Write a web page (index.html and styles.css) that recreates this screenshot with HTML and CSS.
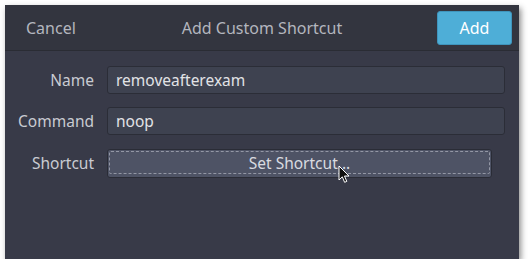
FILE: index.html
```html
<!DOCTYPE html>
<html>
<head>
<meta charset="utf-8">
<link rel="stylesheet" href="styles.css">
</head>
<body>
<div class="window">
  <div class="header">
    <span class="cancel">Cancel</span>
    <span class="title">Add Custom Shortcut</span>
    <button class="add">Add</button>
  </div>
  <div class="form">
    <label class="label">Name</label>
    <div class="input">removeafterexam</div>
    <label class="label">Command</label>
    <div class="input">noop</div>
    <label class="label">Shortcut</label>
    <div class="shortcut-wrap">
      <div class="shortcut"><span class="focus">Set Shortcut...</span></div>
      <svg class="cursor" width="12" height="19" viewBox="0 0 12 19"><path d="M1 1 L1 15 L4.3 11.8 L6.6 17.3 L8.8 16.4 L6.5 11 L11 11 Z" fill="#111" stroke="#fff" stroke-width="1" stroke-linejoin="round"/></svg>
    </div>
  </div>
</div>
</body>
</html>
```
FILE: styles.css
```css
html, body {
  margin: 0;
  padding: 0;
  background: #ffffff;
}
body {
  font-family: "Noto Sans", "Open Sans", sans-serif;
  font-size: 15.5px;
}
.window {
  margin: 5px 0 0 5px;
  width: 514px;
  height: 254px;
  background: #383a48;
  box-shadow: 2px 3px 6px rgba(0, 0, 0, 0.45);
  display: flex;
  flex-direction: column;
}
.header {
  height: 45px;
  background: #33353f;
  border-bottom: 1px solid #2a2c34;
  display: grid;
  grid-template-columns: 1fr auto 1fr;
  align-items: center;
  padding: 0 7px;
}
.cancel {
  color: #b3b6be;
  margin-left: 14px;
  justify-self: start;
  font-size: 16px;
}
.title {
  color: #b3b6be;
  font-size: 16px;
}
.add {
  justify-self: end;
  width: 75px;
  height: 34px;
  margin-top: 1px;
  background: #4eaed7;
  border: 1px solid #3f95bd;
  border-radius: 3px;
  color: #ffffff;
  font-family: inherit;
  font-size: 16px;
  padding: 0;
}
.form {
  display: grid;
  grid-template-columns: 79px 1fr;
  column-gap: 13px;
  row-gap: 13px;
  padding: 15px 14px 0 10px;
  align-items: center;
}
.label {
  text-align: right;
  color: #c9cbd2;
}
.input {
  height: 26px;
  line-height: 26px;
  background: #3e4250;
  border: 1px solid #2b2d37;
  border-radius: 3px;
  padding-left: 8px;
  color: #e2e3e6;
}
.shortcut-wrap {
  position: relative;
  margin-top: 1px;
  margin-right: 13px;
}
.shortcut {
  height: 25px;
  background: #4e5365;
  border: 1px solid #2a2c36;
  border-radius: 3px;
  padding: 1px;
}
.focus {
  display: block;
  height: 23px;
  line-height: 22px;
  border: 1px dashed #9397a5;
  border-radius: 2px;
  box-sizing: border-box;
  text-align: center;
  color: #d9dbe0;
}
.cursor {
  position: absolute;
  left: 231px;
  top: 16px;
}
```
